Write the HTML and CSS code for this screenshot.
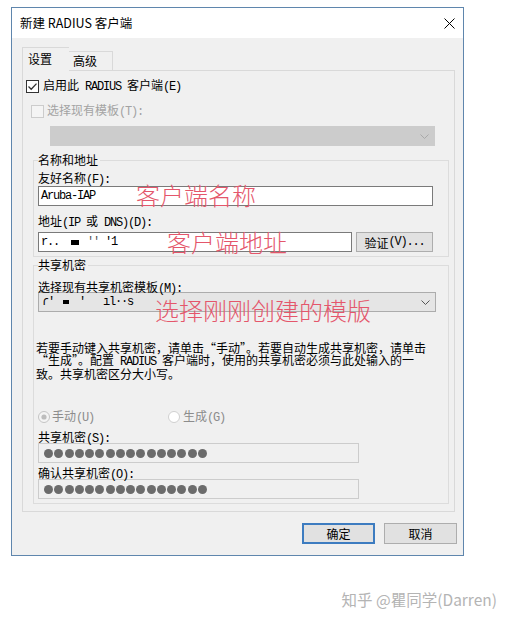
FILE: index.html
```html
<!DOCTYPE html>
<html lang="zh-CN">
<head>
    <meta charset="UTF-8">
    <title>新建 RADIUS 客户端</title>
    <link rel="stylesheet" href="styles.css">
</head>
<body>

<div class="window">
    <div class="titlebar">
        <span class="title">新建 RADIUS 客户端</span>
        <svg class="close" width="11" height="11" viewBox="0 0 11 11">
            <path d="M0.5 0.5L10.5 10.5M10.5 0.5L0.5 10.5" stroke="#000" stroke-width="1" fill="none"/>
        </svg>
    </div>

    <div class="client">
        <div class="tabs">
            <div class="tab active">设置</div>
            <div class="tab">高级</div>
        </div>

        <div class="panel">
            <div class="check-row">
                <svg class="checkbox" width="13" height="13" viewBox="0 0 13 13">
                    <rect x="0.5" y="0.5" width="12" height="12" fill="#fff" stroke="#333"/>
                    <path d="M2.5 6.5L5.2 9.2L10.5 3.6" stroke="#333" stroke-width="1.3" fill="none"/>
                </svg>
                <span>启用此<span class="en"> RADIUS </span>客户端<span class="en">(E)</span></span>
            </div>

            <div class="check-row disabled">
                <svg class="checkbox" width="13" height="13" viewBox="0 0 13 13">
                    <rect x="0.5" y="0.5" width="12" height="12" fill="#f4f4f4" stroke="#cccccc"/>
                </svg>
                <span>选择现有模板<span class="en">(T):</span></span>
            </div>

            <div class="select select-off">
                <svg class="chevron" width="9" height="5" viewBox="0 0 9 5">
                    <path d="M0.5 0.5L4.5 4.5L8.5 0.5" stroke="#a9a9a9" fill="none"/>
                </svg>
            </div>

            <fieldset class="group">
                <legend>名称和地址</legend>
                <div class="label first">友好名称<span class="en">(F):</span></div>
                <div class="input name-input"><span class="en">Aruba-IAP</span></div>
                <div class="label gap-lg">地址<span class="en">(IP </span>或<span class="en"> DNS)(D):</span></div>
                <div class="row">
                    <div class="input addr-input">
                        <span class="en">r..</span><i class="blot"></i><span class="en mark">''</span><span class="en">'1</span>
                    </div>
                    <div class="button">验证<span class="en">(V)...</span></div>
                </div>
            </fieldset>

            <fieldset class="group secret">
                <legend>共享机密</legend>
                <div class="label first">选择现有共享机密模板<span class="en">(M):</span></div>
                <div class="select select-on">
                    <span class="masked"><span class="en">ɾ'</span><i class="blot small"></i><span class="en">'</span><span class="en far">ıl··s</span></span>
                    <svg class="chevron" width="9" height="5" viewBox="0 0 9 5">
                        <path d="M0.5 0.5L4.5 4.5L8.5 0.5" stroke="#555" fill="none"/>
                    </svg>
                </div>
                <p class="hint">
                    若要手动键入共享机密，请单击“手动”。若要自动生成共享机密，请单击<br>
                    “生成”。配置<span class="en"> RADIUS </span>客户端时，使用的共享机密必须与此处输入的一<br>
                    致。共享机密区分大小写。
                </p>
                <div class="radio-row">
                    <div class="radio-item first">
                        <svg width="12" height="12" viewBox="0 0 12 12">
                            <circle cx="6" cy="6" r="5.5" fill="#f4f4f4" stroke="#c4c4c4"/>
                            <circle cx="6" cy="6" r="2.6" fill="#bdbdbd"/>
                        </svg>
                        <span>手动<span class="en">(U)</span></span>
                    </div>
                    <div class="radio-item">
                        <svg width="12" height="12" viewBox="0 0 12 12">
                            <circle cx="6" cy="6" r="5.5" fill="#fff" stroke="#cfcfcf"/>
                        </svg>
                        <span>生成<span class="en">(G)</span></span>
                    </div>
                </div>
                <div class="label gap-sm">共享机密<span class="en">(S):</span></div>
                <div class="input pw-input">
                    <i class="dot"></i><i class="dot"></i><i class="dot"></i><i class="dot"></i>
                    <i class="dot"></i><i class="dot"></i><i class="dot"></i><i class="dot"></i>
                    <i class="dot"></i><i class="dot"></i><i class="dot"></i><i class="dot"></i>
                    <i class="dot"></i><i class="dot"></i><i class="dot"></i><i class="dot"></i>
                </div>
                <div class="label gap-xs">确认共享机密<span class="en">(O):</span></div>
                <div class="input pw-input">
                    <i class="dot"></i><i class="dot"></i><i class="dot"></i><i class="dot"></i>
                    <i class="dot"></i><i class="dot"></i><i class="dot"></i><i class="dot"></i>
                    <i class="dot"></i><i class="dot"></i><i class="dot"></i><i class="dot"></i>
                    <i class="dot"></i><i class="dot"></i><i class="dot"></i><i class="dot"></i>
                </div>
            </fieldset>
        </div>

        <div class="actions">
            <div class="button default">确定</div>
            <div class="button">取消</div>
        </div>
    </div>

    <!-- 红色标注 -->
    <div class="note note-name">客户端名称</div>
    <div class="note note-addr">客户端地址</div>
    <div class="note note-tpl">选择刚刚创建的模版</div>
</div>

<div class="watermark">知乎 @瞿同学(Darren)</div>

</body>
</html>
```

FILE: styles.css
```css
* {
    margin: 0;
    padding: 0;
    box-sizing: border-box;
}

body {
    width: 511px;
    height: 623px;
    overflow: hidden;
    background: #fff;
    font-family: "Noto Sans CJK SC", sans-serif;
    font-size: 12px;
    color: #000;
}

.en {
    font-family: "Liberation Mono", monospace;
    font-size: 12px;
    letter-spacing: -1.2px;
}

/* 窗口 */
.window {
    position: relative;
    width: 453px;
    height: 549px;
    margin: 7px 0 0 11px;
    border: 1px solid #5f86ad;
    background: #f0f0f0;
}

.titlebar {
    height: 30px;
    background: #fff;
    display: flex;
    align-items: center;
    justify-content: space-between;
    padding: 0 8px 0 8px;
}

.title {
    line-height: 16px;
    font-size: 12.5px;
}

.client {
    padding: 9px 8px 0 10px;
}

/* 选项卡 */
.tabs {
    display: flex;
    align-items: flex-end;
    height: 24px;
    margin-bottom: -1px;
    position: relative;
    z-index: 1;
}

.tab {
    width: 44px;
    height: 19px;
    margin-bottom: 1px;
    padding: 2px 0 0 4px;
    line-height: 14px;
    border: 1px solid #d9d9d9;
    border-left: none;
    border-bottom: none;
    background: #f0f0f0;
}

.tab.active {
    width: 47px;
    height: 24px;
    margin-bottom: 0;
    padding: 4px 0 0 5px;
    border-left: 1px solid #d9d9d9;
    border-right: none;
}

.panel {
    width: 433px;
    border: 1px solid #d9d9d9;
    padding: 8px 5px 7px 0;
    background: #f0f0f0;
}

.check-row {
    display: flex;
    align-items: center;
    gap: 4px;
    height: 14px;
    line-height: 14px;
    margin-left: 3px;
}

.check-row.disabled {
    margin: 11px 0 0 8px;
    gap: 3px;
    color: #a3a3a3;
}

.select {
    height: 20px;
    display: flex;
    align-items: center;
    justify-content: space-between;
    padding: 0 5px 0 3px;
}

.select-off {
    width: 385px;
    margin: 8px 0 0 27px;
    background: #cccccc;
    border: 1px solid #cccccc;
    justify-content: flex-end;
}

.select-on {
    width: 398px;
    margin-top: -1px;
    background: #e5e5e5;
    border: 1px solid #acacac;
}

/* 分组框 */
.group {
    width: 416px;
    min-width: 0;
    margin: 7px 0 0 10px;
    padding: 0 4px 4px 4px;
    border: 1px solid #dcdcdc;
}

.group.secret {
    margin-top: 1px;
}

.group legend {
    line-height: 14px;
    padding: 0 2px 0 0;
}

.label {
    height: 13px;
    line-height: 13px;
}

.label.first {
    margin-top: 4px;
}

.secret .label.first {
    margin-top: 8px;
}

.label.gap-lg {
    margin-top: 8px;
}

.label.gap-sm {
    margin-top: 6px;
}

.label.gap-xs {
    margin-top: 3px;
}

.input {
    height: 20px;
    display: flex;
    align-items: center;
    padding-left: 2px;
    background: #fff;
    border: 1px solid #7a7a7a;
}

.name-input {
    width: 395px;
    margin-top: 2px;
}

.row {
    display: flex;
    gap: 4px;
    margin-top: 5px;
}

.addr-input {
    width: 314px;
}

.blot {
    display: inline-block;
    width: 8px;
    height: 5px;
    margin: 0 8px 0 12px;
    background: #000;
}

.blot.small {
    width: 6px;
    height: 4px;
    margin: 0 10px 0 9px;
}

.mark {
    margin-right: 6px;
    color: #555;
}

.masked {
    display: flex;
    align-items: center;
}

.far {
    margin-left: 18px;
}

.button {
    width: 77px;
    height: 20px;
    display: flex;
    align-items: center;
    justify-content: center;
    background: #e1e1e1;
    border: 1px solid #adadad;
}

.hint {
    height: 36px;
    margin: 30px 0 0 -2px;
    line-height: 12px;
    white-space: nowrap;
}

.radio-row {
    display: flex;
    align-items: center;
    height: 14px;
    margin-top: 32px;
    color: #8c8c8c;
}

.radio-item {
    display: flex;
    align-items: center;
    gap: 2px;
    line-height: 14px;
}

.radio-item.first {
    width: 130px;
}

.radio-item + .radio-item svg {
    margin-right: 1px;
}

.pw-input {
    width: 321px;
    padding-left: 5px;
    background: #f0f0f0;
    border-color: #cccccc;
}

.dot {
    display: inline-block;
    width: 9px;
    height: 9px;
    margin-right: 1.25px;
    border-radius: 50%;
    background: #6b6b6b;
}

/* 底部按钮 */
.actions {
    display: flex;
    justify-content: flex-end;
    gap: 9px;
    margin: 11px -2px 0 0;
}

.actions .button {
    width: 73px;
    height: 21px;
}

.button.default {
    border: 2px solid #3d7cc0;
}

/* 标注文字 */
.note {
    position: absolute;
    font-size: 24px;
    line-height: 24px;
    font-weight: 300;
    color: #e4566b;
    white-space: nowrap;
}

.note-name {
    left: 124px;
    top: 175px;
}

.note-addr {
    left: 155px;
    top: 222px;
}

.note-tpl {
    left: 143px;
    top: 290px;
}

.watermark {
    margin-top: 33px;
    padding-right: 14px;
    text-align: right;
    font-size: 15.5px;
    line-height: 20px;
    color: #b4b4b4;
}
```
